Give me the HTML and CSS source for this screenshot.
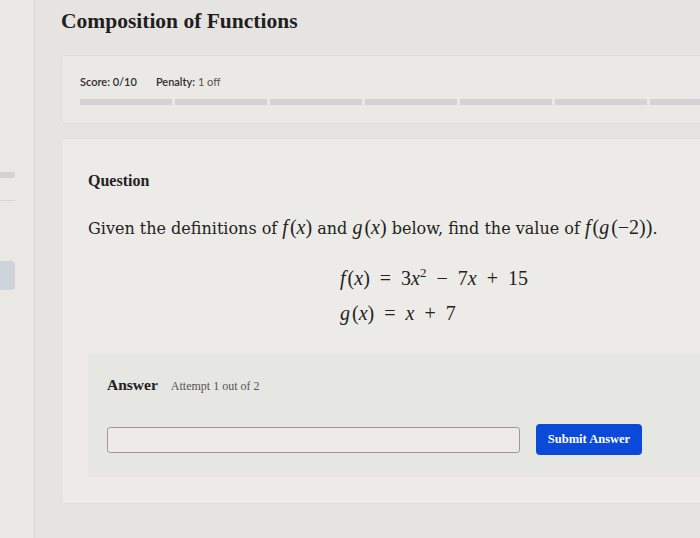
FILE: index.html
```html
<!DOCTYPE html>
<html>
<head>
<meta charset="utf-8">
<link rel="stylesheet" href="styles.css">
</head>
<body>
<div class="layout">
  <aside class="side">
    <div class="side-bar"></div>
    <div class="side-line"></div>
    <div class="side-block"></div>
  </aside>
  <main class="main">
    <h1 class="title">Composition of Functions</h1>
    <section class="score-card">
      <div class="score-row">
        <span class="score">Score: 0/10</span>
        <span class="penalty"><b>Penalty:</b> 1 off</span>
      </div>
      <div class="progress">
        <span></span><span></span><span></span><span></span><span></span>
        <span></span><span></span><span></span>
      </div>
    </section>
    <section class="q-card">
      <h2 class="q-label">Question</h2>
      <p class="q-text">Given the definitions of <span class="m"><i class="fn">f</i>(<i>x</i>)</span> and <span class="m"><i class="fn">g</i>(<i>x</i>)</span> below, find the value of <span class="m"><i class="fn">f</i>(<i class="fn">g</i>(−2))</span>.</p>
      <div class="eqs">
        <div class="eq-block">
          <div class="eq m"><i class="fn">f</i>(<i>x</i>) <span class="op">=</span> 3<i>x</i><sup>2</sup> <span class="op">−</span> 7<i>x</i> <span class="op">+</span> 15</div>
          <div class="eq m"><i class="fn">g</i>(<i>x</i>) <span class="op">=</span> <i>x</i> <span class="op">+</span> 7</div>
        </div>
      </div>
      <div class="answer">
        <div class="ans-head"><span class="ans-label">Answer</span><span class="attempt">Attempt 1 out of 2</span></div>
        <div class="ans-row">
          <div class="ans-input"></div>
          <button class="submit">Submit Answer</button>
        </div>
      </div>
    </section>
  </main>
</div>
</body>
</html>
```
FILE: styles.css
```css
html, body {
  margin: 0;
  padding: 0;
  background: #e5e4e0;
  overflow: hidden;
  width: 700px;
  height: 538px;
}
.layout {
  display: flex;
  height: 538px;
}
.side {
  width: 35px;
  flex: none;
  background: #e9e8e4;
  border-right: 1px solid #d8d7d3;
  padding-top: 172px;
  box-sizing: border-box;
}
.side-bar {
  width: 15px;
  height: 6px;
  background: #d2d2d1;
  border-radius: 0 3px 3px 0;
}
.side-line {
  width: 15px;
  height: 1px;
  background: #d6d5d1;
  margin-top: 22px;
}
.side-block {
  width: 15px;
  height: 29px;
  margin-top: 60px;
  background: #cfd3da;
  border-radius: 0 4px 4px 0;
}
.main {
  flex: none;
  width: 772px;
  padding-left: 26px;
  box-sizing: border-box;
}
.title {
  margin: 9px 0 0 0;
  font-family: "Liberation Serif", serif;
  font-weight: bold;
  font-size: 21.5px;
  line-height: 24px;
  color: #1f1f1f;
}
.score-card {
  margin-top: 22px;
  width: 746px;
  height: 69px;
  box-sizing: border-box;
  background: #eae9e5;
  border: 1px solid #dddcd8;
  border-radius: 3px;
  padding: 19px 0 0 18px;
}
.score-row {
  font-family: Lato, "Liberation Sans", sans-serif;
  font-size: 11px;
  line-height: 14px;
  color: #333;
  display: flex;
  gap: 19px;
}
.score { font-weight: 600; color: #2e2e2e; }
.penalty { color: #555; }
.penalty b { font-weight: 600; color: #2e2e2e; }
.progress {
  margin-top: 10px;
  display: flex;
  gap: 3px;
}
.progress span {
  width: 92px;
  height: 6px;
  flex: none;
  background: #d2d3d5;
}
.q-card {
  margin-top: 14px;
  width: 746px;
  height: 366px;
  box-sizing: border-box;
  background: #ecebe7;
  border: 1px solid #e0dfdb;
  border-radius: 3px;
  padding: 32px 0 0 26px;
}
.q-label {
  margin: 0;
  font-family: "Liberation Serif", serif;
  font-weight: bold;
  font-size: 16px;
  line-height: 20px;
  color: #222;
}
.q-text {
  margin: 24px 0 0 0;
  font-family: "DejaVu Serif", serif;
  font-size: 16px;
  line-height: 24px;
  color: #222;
}
.m {
  font-family: "Liberation Serif", serif;
  font-size: 20px;
}
.m i { font-style: italic; }
.m i.fn { margin-right: 2px; }
.eqs {
  margin-top: 25px;
  display: flex;
  justify-content: center;
  padding-right: 26px;
}
.eq-block {
  display: flex;
  flex-direction: column;
  gap: 10px;
}
.eq {
  font-size: 20px;
  line-height: 25px;
  color: #222;
}
.eq sup { font-size: 13px; line-height: 0; }
.op { padding: 0 5px; }
.answer {
  margin-top: 28px;
  width: 694px;
  height: 123px;
  box-sizing: border-box;
  background: #e6e6e3;
  padding: 22px 0 0 19px;
}
.ans-head {
  display: flex;
  align-items: baseline;
  gap: 13px;
}
.ans-label {
  font-family: "Liberation Serif", serif;
  font-weight: bold;
  font-size: 15.5px;
  color: #222;
}
.attempt {
  font-family: "Liberation Serif", serif;
  font-size: 12px;
  color: #555;
}
.ans-row {
  margin-top: 30px;
  display: flex;
  align-items: center;
  gap: 16px;
}
.ans-input {
  width: 413px;
  height: 26px;
  box-sizing: border-box;
  border: 1px solid #9a9a98;
  border-radius: 3px;
  background: #ecebe8;
}
.submit {
  width: 106px;
  height: 31px;
  border: none;
  border-radius: 4px;
  background: #0b49d8;
  color: #fff;
  font-family: "Liberation Serif", serif;
  font-weight: bold;
  font-size: 12.5px;
  padding: 0;
}
```
